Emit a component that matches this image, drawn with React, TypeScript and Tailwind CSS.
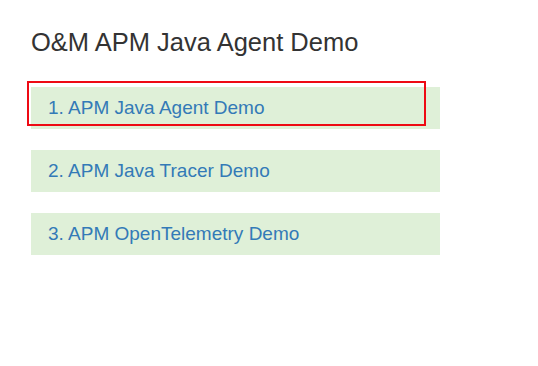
const DEMOS = [
  "1. APM Java Agent Demo",
  "2. APM Java Tracer Demo",
  "3. APM OpenTelemetry Demo",
];

export default function App() {
  return (
    <div className="min-h-[366px] w-[538px] bg-white font-['Liberation_Sans',Arial,sans-serif]">
      <div className="pl-[31px] pt-[27px]">
        <h1 className="text-[25.5px] leading-[30px] text-[#333333]">O&amp;M APM Java Agent Demo</h1>

        <div className="mt-[30px] flex w-[409px] flex-col gap-[21px]">
          {DEMOS.map((label, i) => (
            <div key={label} className="relative">
              <a
                href="#"
                className="flex h-[42px] items-center bg-[#dff0d8] pl-[17px] text-[19px] text-[#337ab7]"
              >
                {label}
              </a>
              {/* highlight annotation on first item */}
              {i === 0 && (
                <div className="pointer-events-none absolute -left-[4px] -top-[6px] h-[45px] w-[399px] border-2 border-[#ee0a14]" />
              )}
            </div>
          ))}
        </div>
      </div>
    </div>
  );
}
